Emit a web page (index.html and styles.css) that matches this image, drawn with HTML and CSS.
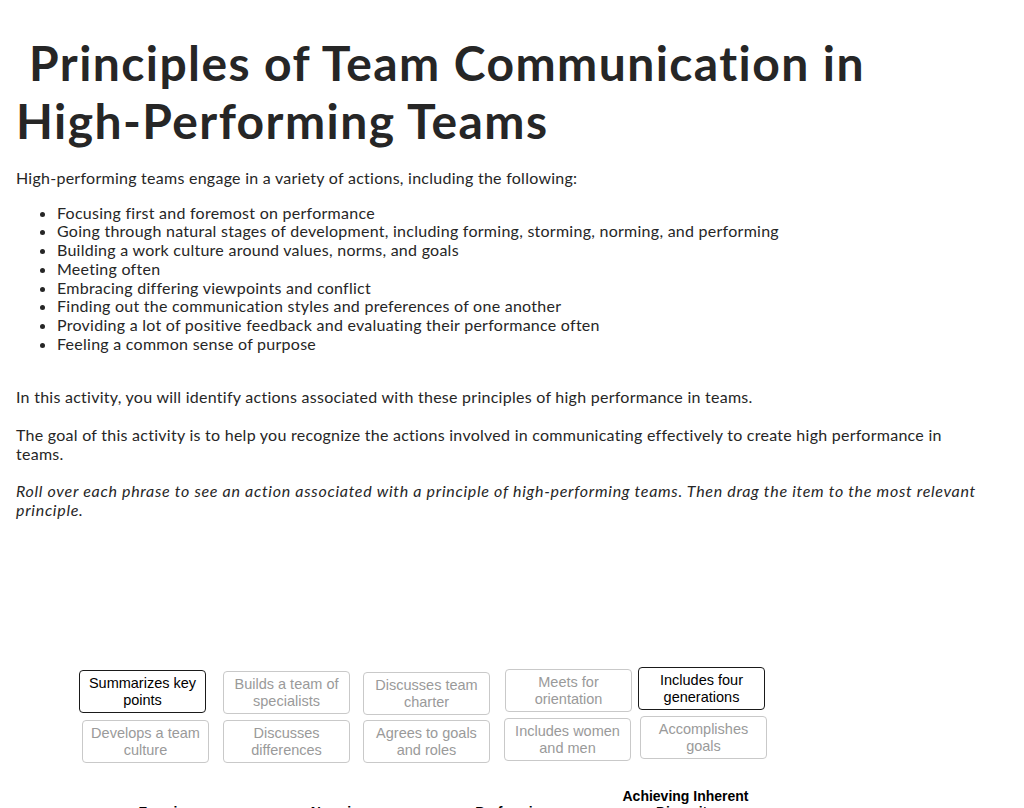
FILE: index.html
```html
<!DOCTYPE html>
<html lang="en">
<head>
<meta charset="utf-8">
<title>Principles of Team Communication in High-Performing Teams</title>
<link rel="stylesheet" href="styles.css">
</head>
<body>
<main class="page">
  <h1 class="title">&nbsp;Principles of Team Communication in High-Performing Teams</h1>
  <p class="intro">High-performing teams engage in a variety of actions, including the following:</p>
  <ul class="list">
    <li>Focusing first and foremost on performance</li>
    <li>Going through natural stages of development, including forming, storming, norming, and performing</li>
    <li>Building a work culture around values, norms, and goals</li>
    <li>Meeting often</li>
    <li>Embracing differing viewpoints and conflict</li>
    <li>Finding out the communication styles and preferences of one another</li>
    <li>Providing a lot of positive feedback and evaluating their performance often</li>
    <li>Feeling a common sense of purpose</li>
  </ul>
  <p class="para first">In this activity, you will identify actions associated with these principles of high performance in teams.</p>
  <p class="para">The goal of this activity is to help you recognize the actions involved in communicating effectively to create high performance in teams.</p>
  <p class="para"><em>Roll over each phrase to see an action associated with a principle of high-performing teams. Then drag the item to the most relevant principle.</em></p>

  <section class="activity">
    <div class="tiles">
      <div class="tile active t1">Summarizes key points</div>
      <div class="tile t2">Builds a team of specialists</div>
      <div class="tile t3">Discusses team charter</div>
      <div class="tile t4">Meets for orientation</div>
      <div class="tile active t5">Includes four generations</div>
      <div class="tile t6">Develops a team culture</div>
      <div class="tile t7">Discusses differences</div>
      <div class="tile t8">Agrees to goals and roles</div>
      <div class="tile t9">Includes women and men</div>
      <div class="tile t10">Accomplishes goals</div>
    </div>
    <div class="zones">
      <div class="zone low"><span class="zone-title">Forming</span></div>
      <div class="zone low"><span class="zone-title">Norming</span></div>
      <div class="zone low"><span class="zone-title">Performing</span></div>
      <div class="zone"><span class="zone-title">Achieving Inherent</span><span class="zone-title">Diversity</span></div>
    </div>
  </section>
</main>
</body>
</html>
```
FILE: styles.css
```css
html, body {
  margin: 0;
  padding: 0;
  background: #ffffff;
}

body {
  font-family: "Lato", "Liberation Sans", sans-serif;
  color: #262626;
  font-size: 16px;
  line-height: 18.7px;
  letter-spacing: 0.26px;
  font-variant-ligatures: none;
}

.page {
  padding: 34px 40px 0 16px;
  width: 968px;
  height: 774px;
  overflow: hidden;
}

.title {
  margin: 0;
  font-size: 48px;
  line-height: 57.5px;
  font-weight: 700;
  color: #262626;
  letter-spacing: 1.42px;
}

.intro {
  margin: 20px 0 0 0;
}

.list {
  margin: 16px 0 0 0;
  padding-left: 41px;
}

.para {
  margin: 19px 0 0 0;
}

.para.first {
  margin-top: 35px;
}

.para em {
  font-style: italic;
  letter-spacing: 0.7px;
}

.activity {
  position: relative;
  height: 300px;
}

.tiles {
  position: relative;
  height: 260px;
}

.tile {
  position: absolute;
  box-sizing: border-box;
  width: 127px;
  height: 43px;
  border: 1px solid #c9c9c9;
  border-radius: 4px;
  background: #ffffff;
  color: #9a9a9a;
  font-family: "Liberation Sans", Arial, sans-serif;
  font-size: 14.5px;
  line-height: 17px;
  letter-spacing: 0;
  text-align: center;
  display: flex;
  align-items: center;
  justify-content: center;
  padding: 2px 5px 0 5px;
}

.tile.active {
  border-color: #1a1a1a;
  color: #000000;
}

/* tile positions on the drag canvas (relative to .tiles) */
.t1 { left: 63px; top: 150px; }
.t2 { left: 207px; top: 151px; }
.t3 { left: 347px; top: 152px; }
.t4 { left: 489px; top: 149px; }
.t5 { left: 622px; top: 147px; }
.t6 { left: 66px; top: 200px; }
.t7 { left: 207px; top: 200px; }
.t8 { left: 347px; top: 200px; }
.t9 { left: 488px; top: 198px; }
.t10 { left: 624px; top: 196px; }

.zones {
  position: absolute;
  left: 64px;
  top: 268px;
  display: flex;
  pointer-events: none;
}

.zone {
  width: 173px;
  display: flex;
  flex-direction: column;
  align-items: center;
  font-family: "Liberation Sans", Arial, sans-serif;
  letter-spacing: 0;
}

.zone.low {
  padding-top: 16px;
}

.zone-title {
  font-weight: 700;
  font-size: 14px;
  line-height: 16px;
  color: #000000;
  white-space: nowrap;
}
```
